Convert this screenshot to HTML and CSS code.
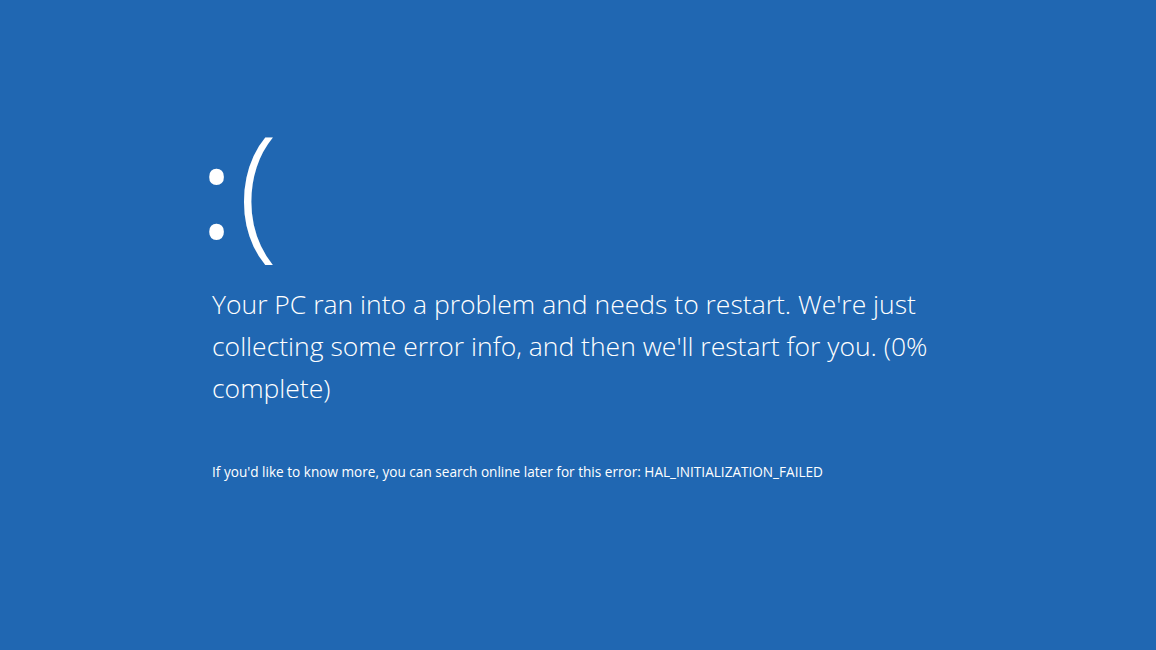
FILE: index.html
```html
<!DOCTYPE html>
<html lang="en">
<head>
<meta charset="utf-8">
<title>Your PC ran into a problem</title>
<link rel="stylesheet" href="styles.css">
</head>
<body>
<main class="screen">
  <div class="face"><span class="eyes">:</span><span class="mouth">(</span></div>
  <p class="message">Your PC ran into a problem and needs to restart. We're just collecting some error info, and then we'll restart for you. (0% complete)</p>
  <p class="details">If you'd like to know more, you can search online later for this error: HAL_INITIALIZATION_FAILED</p>
</main>
</body>
</html>
```
FILE: styles.css
```css
html, body {
  margin: 0;
  padding: 0;
  height: 100%;
}
body {
  background: #2067b2;
  color: #ffffff;
  font-family: "Open Sans", "Noto Sans", "Liberation Sans", sans-serif;
  font-weight: 300;
  overflow: hidden;
}
.screen {
  padding: 88px 0 0 200px;
}
.face {
  font-size: 146px;
  line-height: 195px;
  height: 195px;
  font-weight: 300;
  white-space: nowrap;
}
.eyes {
  font-size: 126px;
  font-weight: 400;
  vertical-align: 4px;
}
.mouth {
  margin-left: 5px;
}
.message {
  margin: 0;
  width: 730px;
  padding-left: 12px;
  font-size: 26.5px;
  line-height: 42px;
}
.details {
  margin: 53px 0 0;
  padding-left: 12px;
  font-size: 13.6px;
  line-height: 20px;
  font-weight: 400;
}
```
